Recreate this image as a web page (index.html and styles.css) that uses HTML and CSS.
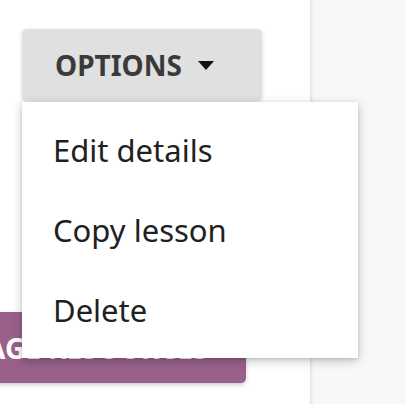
FILE: index.html
```html
<!DOCTYPE html>
<html>
<head>
<meta charset="utf-8">
<link rel="stylesheet" href="styles.css">
</head>
<body>
<div class="page">
  <main class="main">
    <div class="dropdown">
      <button class="options"><span class="options-label">OPTIONS</span><span class="caret"></span></button>
      <ul class="menu">
        <li class="menu-item">Edit details</li>
        <li class="menu-item">Copy lesson</li>
        <li class="menu-item">Delete</li>
      </ul>
    </div>
    <button class="manage">MANAGE RESOURCES</button>
  </main>
  <aside class="side"></aside>
</div>
</body>
</html>
```
FILE: styles.css
```css
html, body {
  margin: 0;
  padding: 0;
  background: #ffffff;
}
.page {
  display: flex;
  height: 404px;
  overflow: hidden;
  font-family: "Noto Sans", "Open Sans", sans-serif;
}
.main {
  width: 310px;
  flex: none;
  padding: 29px 0 0 22px;
  box-sizing: border-box;
  display: flex;
  flex-direction: column;
  align-items: flex-start;
  background: #ffffff;
}
.side {
  flex: 1;
  background: #f8f8f8;
  border-left: 1px solid #e4e4e4;
  box-shadow: inset 3px 0 3px -2px rgba(0,0,0,0.08);
}
.dropdown {
  position: relative;
  z-index: 5;
}
.options {
  width: 240px;
  height: 72px;
  border: none;
  border-radius: 5px;
  background: #e0e0e0;
  box-shadow: 0 1px 4px rgba(0,0,0,0.15);
  display: flex;
  align-items: center;
  gap: 16px;
  padding: 0 0 0 33px;
  font-family: inherit;
  font-weight: 700;
  font-size: 28px;
  color: #3a3a3a;
  cursor: pointer;
}
.caret {
  width: 0;
  height: 0;
  border-left: 8px solid transparent;
  border-right: 8px solid transparent;
  border-top: 9px solid #111111;
}
.menu {
  position: absolute;
  z-index: 10;
  top: 73px;
  left: 0;
  width: 336px;
  height: 256px;
  box-sizing: border-box;
  margin: 0;
  padding: 8px 0;
  list-style: none;
  background: #ffffff;
  box-shadow: 0 3px 10px rgba(0,0,0,0.22), 0 1px 3px rgba(0,0,0,0.12);
}
.menu-item {
  height: 80px;
  line-height: 80px;
  padding-left: 31px;
  font-size: 31px;
  color: #212121;
}
.manage {
  margin-top: 211px;
  margin-left: -152px;
  width: 376px;
  height: 71px;
  border: none;
  border-radius: 5px;
  background: #996189;
  box-shadow: 0 2px 4px rgba(0,0,0,0.2);
  color: #ffffff;
  font-family: inherit;
  font-weight: 700;
  font-size: 28px;
  padding: 0 0 0 10px;
}
```
